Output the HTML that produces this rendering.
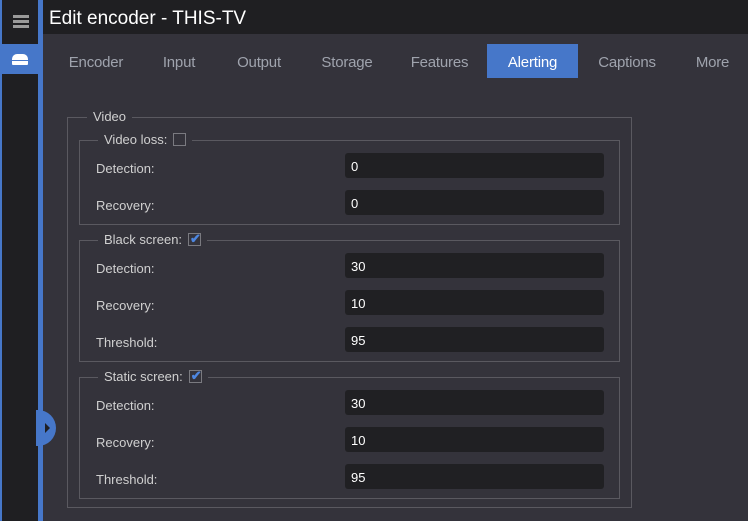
<!DOCTYPE html>
<html><head><style>
*{margin:0;padding:0;box-sizing:border-box}
body{width:748px;height:521px;background:#34333b;font-family:"Liberation Sans",sans-serif;position:relative;overflow:hidden;color:#d8d8d8}
.a{position:absolute}
.box{position:absolute;border:1px solid #5a5960}
.leg{position:absolute;background:#34333b;padding:0 6px;font-size:13px;color:#d0d0d0;line-height:14px}
.lbl{position:absolute;font-size:13px;color:#d0d0d0;left:96px}
.in{position:absolute;left:345px;width:259px;height:25px;background:#202023;border-radius:3px;font-size:13px;color:#fff;padding:6px 0 0 6px}
.tab{position:absolute;top:44px;height:34px;line-height:38px;font-size:15px;color:#9fa3ad;text-align:center;letter-spacing:-0.2px}
.cb{display:inline-block;width:13px;height:13px;border:1px solid #7a7a80;vertical-align:-2px;margin-left:6px;position:relative}
</style></head><body>
<div class="a" style="left:0;top:0;width:43px;height:521px;background:#4677c9"></div>
<div class="a" style="left:2px;top:0;width:36px;height:44px;background:#1f1f22"></div>
<div class="a" style="left:2px;top:74px;width:36px;height:447px;background:#1f1f22"></div>
<div class="a" style="left:13px;top:15px;width:16px;height:3px;background:#9a9a9a;box-shadow:0 5px 0 #9a9a9a,0 10px 0 #9a9a9a"></div>
<div class="a" style="left:12px;top:54px;width:16px;height:11px;background:#fff;border-radius:5px 5px 1px 1px"></div>
<div class="a" style="left:12px;top:60px;width:16px;height:1px;background:#4677c9"></div>
<div class="a" style="left:36px;top:410px;width:20px;height:36px;background:#4677c9;border-radius:0 18px 18px 0"></div>
<div class="a" style="left:45px;top:423px;width:0;height:0;border-left:5px solid #1f1f22;border-top:5px solid transparent;border-bottom:5px solid transparent"></div>
<div class="a" style="left:43px;top:0;width:705px;height:34px;background:#1f1f22"></div>
<div class="a" style="left:49px;top:8px;font-size:19px;color:#fff">Edit encoder - THIS-TV</div>
<div class="tab" style="left:61px;width:70px">Encoder</div>
<div class="tab" style="left:150px;width:58px">Input</div>
<div class="tab" style="left:225px;width:68px">Output</div>
<div class="tab" style="left:310px;width:74px">Storage</div>
<div class="tab" style="left:402px;width:75px">Features</div>
<div class="tab" style="left:487px;width:91px;background:#4677c9;color:#fff">Alerting</div>
<div class="tab" style="left:590px;width:74px">Captions</div>
<div class="tab" style="left:685px;width:55px">More</div>

<div class="box" style="left:67px;top:117px;width:565px;height:391px"></div>
<div class="leg" style="left:87px;top:110px">Video</div>

<div class="box" style="left:79px;top:140px;width:541px;height:85px"></div>
<div class="leg" style="left:98px;top:133px">Video loss:<span class="cb"></span></div>
<div class="lbl" style="top:161px">Detection:</div><div class="in" style="top:153px">0</div>
<div class="lbl" style="top:198px">Recovery:</div><div class="in" style="top:190px">0</div>

<div class="box" style="left:79px;top:240px;width:541px;height:122px"></div>
<div class="leg" style="left:98px;top:233px">Black screen:<span class="cb"><span class="a" style="left:1px;top:-2px;color:#4d86e0;font-size:13px;font-weight:bold">✔</span></span></div>
<div class="lbl" style="top:261px">Detection:</div><div class="in" style="top:253px">30</div>
<div class="lbl" style="top:298px">Recovery:</div><div class="in" style="top:290px">10</div>
<div class="lbl" style="top:335px">Threshold:</div><div class="in" style="top:327px">95</div>

<div class="box" style="left:79px;top:377px;width:541px;height:122px"></div>
<div class="leg" style="left:98px;top:370px">Static screen:<span class="cb"><span class="a" style="left:1px;top:-2px;color:#4d86e0;font-size:13px;font-weight:bold">✔</span></span></div>
<div class="lbl" style="top:398px">Detection:</div><div class="in" style="top:390px">30</div>
<div class="lbl" style="top:435px">Recovery:</div><div class="in" style="top:427px">10</div>
<div class="lbl" style="top:472px">Threshold:</div><div class="in" style="top:464px">95</div>
</body></html>
